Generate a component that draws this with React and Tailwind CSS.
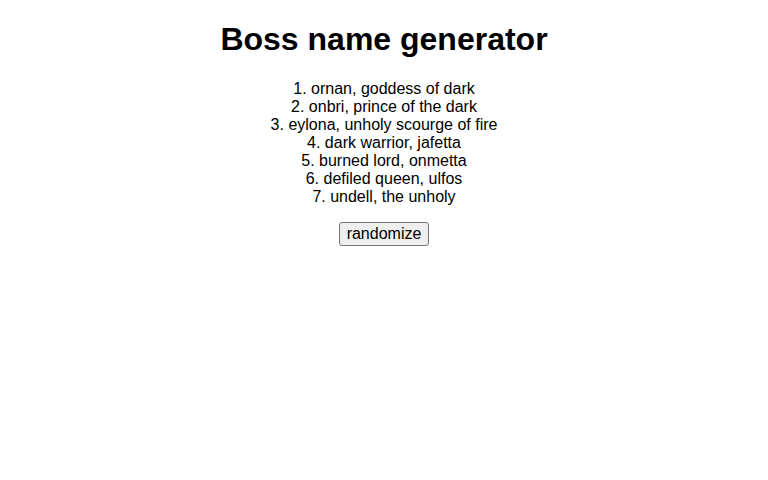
import { useState } from 'react';

const firstNames = ['ornan', 'onbri', 'eylona', 'jafetta', 'onmetta', 'ulfos', 'undell'];

const initial = [
  'ornan, goddess of dark',
  'onbri, prince of the dark',
  'eylona, unholy scourge of fire',
  'dark warrior, jafetta',
  'burned lord, onmetta',
  'defiled queen, ulfos',
  'undell, the unholy',
];

const titles = [
  'goddess of dark',
  'prince of the dark',
  'unholy scourge of fire',
  'the unholy',
  'lord of ash',
  'the fallen',
];

export default function App() {
  const [names, setNames] = useState(initial);

  const randomize = () => {
    setNames(
      firstNames.map((n) => `${n}, ${titles[Math.floor(Math.random() * titles.length)]}`)
    );
  };

  return (
    <div className="min-h-screen bg-white text-black text-center font-['Liberation_Sans',Arial,sans-serif]">
      <h1 className="pt-[21px] text-[32px] leading-[37px] font-bold">Boss name generator</h1>
      <ol className="mt-[22px] text-base leading-[18px]">
        {names.map((name, i) => (
          <li key={i}>
            {i + 1}. {name}
          </li>
        ))}
      </ol>
      <button
        onClick={randomize}
        className="mt-[16px] px-[7px] py-[2px] text-base leading-[18px] bg-[#efefef] border border-[#767676] rounded-[3px] hover:bg-[#e5e5e5]"
      >
        randomize
      </button>
    </div>
  );
}
